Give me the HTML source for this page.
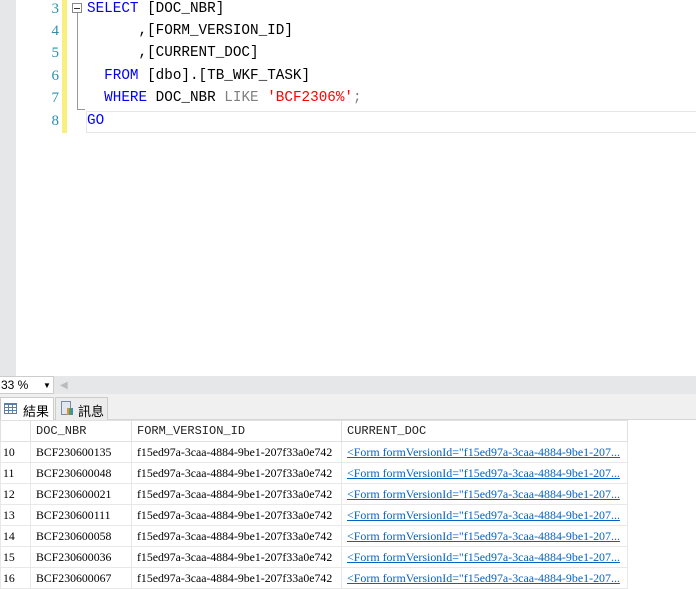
<!DOCTYPE html>
<html><head><style>
*{margin:0;padding:0;box-sizing:border-box}
body{width:696px;height:589px;background:#fff;position:relative;overflow:hidden;font-family:"Liberation Serif",serif}
.strip{position:absolute;left:0;top:0;width:16px;height:376px;background:#e6e7e8}
.ln{position:absolute;left:40px;width:19px;text-align:right;font:15px "Liberation Serif",serif;color:#2b91af}
.yb{position:absolute;left:62px;width:5px;background:#f9ef7c}
.code{position:absolute;font:14.3px "Liberation Mono",monospace;white-space:pre;color:#000}
.k{color:#00f}.g{color:#808080}.r{color:#f00}
.cur{position:absolute;left:86px;top:111px;width:610px;height:22px;border:1px solid #e6e6e6;border-right:none}
.sb{position:absolute;left:0;top:376px;width:696px;height:18px;background:#e6e7e8}
.zoom{position:absolute;left:0;top:376px;width:54px;height:18px;background:#fff;border:1px solid #ccc;border-left:none;font:12px "Liberation Sans",sans-serif;padding:1px 0 0 1px}
.tabs{position:absolute;left:0;top:394px;width:696px;height:26px;background:#f0f0f0;border-bottom:1px solid #d6d6d6}
.tab{position:absolute;top:3px;height:23px;font:13px "Liberation Sans","Noto Sans CJK TC",sans-serif;padding:3px 0 0 22px}
table{position:absolute;left:0;top:420px;border-collapse:collapse;font:11.8px "Liberation Serif",serif;table-layout:fixed;width:627px}
td{border:1px solid #e8e8e8;height:21px;padding:0 0 0 5px;white-space:nowrap;vertical-align:middle;overflow:hidden}
th{border:1px solid #e0e0e0;height:21px;font:12px "Liberation Mono",monospace;font-weight:normal;text-align:left;padding:0 0 0 5px;background:#fff;color:#222}
a{color:#0563c1;text-decoration:underline;font-size:11.95px}
</style></head><body>
<div class="strip"></div>
<div class="yb" style="top:0;height:133px"></div>
<div class="ln" style="top:1px">3</div>
<div class="ln" style="top:23px">4</div>
<div class="ln" style="top:45px">5</div>
<div class="ln" style="top:68px">6</div>
<div class="ln" style="top:90px">7</div>
<div class="ln" style="top:113px">8</div>
<div style="position:absolute;left:72px;top:3px;width:10px;height:10px;border:1px solid #888;background:#fff"></div>
<div style="position:absolute;left:74px;top:8px;width:6px;height:1px;background:#333"></div>
<div style="position:absolute;left:77px;top:13px;width:1px;height:97px;background:#999"></div>
<div style="position:absolute;left:77px;top:109px;width:8px;height:1px;background:#999"></div>
<div class="cur"></div>
<div class="code" style="left:87px;top:1px"><span class="k">SELECT</span> [DOC_NBR]</div>
<div class="code" style="left:87px;top:23px">      ,[FORM_VERSION_ID]</div>
<div class="code" style="left:87px;top:45px">      ,[CURRENT_DOC]</div>
<div class="code" style="left:87px;top:68px">  <span class="k">FROM</span> [dbo].[TB_WKF_TASK]</div>
<div class="code" style="left:87px;top:90px">  <span class="k">WHERE</span> DOC_NBR <span class="g">LIKE</span> <span class="r">'BCF2306%'</span><span class="g">;</span></div>
<div class="code" style="left:87px;top:113px"><span class="k">GO</span></div>
<div class="sb"></div>
<div class="zoom">33 % <span style="position:absolute;left:43px;top:4px;font-size:8px">▼</span></div>
<div style="position:absolute;left:60px;top:380px;font-size:10px;color:#bbb">◀</div>
<div class="tabs">
<div class="tab" style="left:0;width:54px;background:#fff;border:1px solid #ccc;border-bottom:none">結果
<div style="position:absolute;left:3px;top:5px;width:13px;height:11px;border:1px solid #5a7fa8;background:repeating-linear-gradient(90deg,transparent 0 3px,#5a7fa8 3px 4px),repeating-linear-gradient(0deg,#fff 0 2px,#5a7fa8 2px 3px)"></div></div>
<div class="tab" style="left:55px;width:53px;border:1px solid #ccc;border-bottom:none;background:#ececec">訊息
<div style="position:absolute;left:5px;top:3px;width:10px;height:14px;border:1px solid #7a8ca0;background:#dfe7f0"></div>
<div style="position:absolute;left:11px;top:10px;width:6px;height:7px;background:linear-gradient(90deg,#e84 0 2px,#4a4 2px 4px,#48c 4px)"></div></div>
</div>
<table>
<colgroup><col style="width:30px"><col style="width:101px"><col style="width:210px"><col style="width:286px"></colgroup>
<tr><th></th><th>DOC_NBR</th><th>FORM_VERSION_ID</th><th>CURRENT_DOC</th></tr>
<tr><td style="padding-left:2px">10</td><td>BCF230600135</td><td>f15ed97a-3caa-4884-9be1-207f33a0e742</td><td><a>&lt;Form formVersionId="f15ed97a-3caa-4884-9be1-207...</a></td></tr>
<tr><td style="padding-left:2px">11</td><td>BCF230600048</td><td>f15ed97a-3caa-4884-9be1-207f33a0e742</td><td><a>&lt;Form formVersionId="f15ed97a-3caa-4884-9be1-207...</a></td></tr>
<tr><td style="padding-left:2px">12</td><td>BCF230600021</td><td>f15ed97a-3caa-4884-9be1-207f33a0e742</td><td><a>&lt;Form formVersionId="f15ed97a-3caa-4884-9be1-207...</a></td></tr>
<tr><td style="padding-left:2px">13</td><td>BCF230600111</td><td>f15ed97a-3caa-4884-9be1-207f33a0e742</td><td><a>&lt;Form formVersionId="f15ed97a-3caa-4884-9be1-207...</a></td></tr>
<tr><td style="padding-left:2px">14</td><td>BCF230600058</td><td>f15ed97a-3caa-4884-9be1-207f33a0e742</td><td><a>&lt;Form formVersionId="f15ed97a-3caa-4884-9be1-207...</a></td></tr>
<tr><td style="padding-left:2px">15</td><td>BCF230600036</td><td>f15ed97a-3caa-4884-9be1-207f33a0e742</td><td><a>&lt;Form formVersionId="f15ed97a-3caa-4884-9be1-207...</a></td></tr>
<tr><td style="padding-left:2px">16</td><td>BCF230600067</td><td>f15ed97a-3caa-4884-9be1-207f33a0e742</td><td><a>&lt;Form formVersionId="f15ed97a-3caa-4884-9be1-207...</a></td></tr>
</table>
</body></html>
